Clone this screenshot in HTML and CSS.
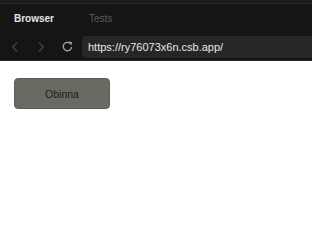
FILE: index.html
```html
<!DOCTYPE html>
<html>
<head>
<meta charset="utf-8">
<link rel="stylesheet" href="styles.css">
</head>
<body>
<div class="chrome">
  <div class="topline"></div>
  <div class="tabs">
    <span class="tab active">Browser</span>
    <span class="tab">Tests</span>
  </div>
  <div class="navbar">
    <span class="nav-btn">
      <svg width="10" height="12" viewBox="0 0 10 12"><path d="M7 1.5 L2.8 6 L7 10.5" fill="none" stroke="#444" stroke-width="1.3"/></svg>
    </span>
    <span class="nav-btn">
      <svg width="10" height="12" viewBox="0 0 10 12"><path d="M3 1.5 L7.2 6 L3 10.5" fill="none" stroke="#444" stroke-width="1.3"/></svg>
    </span>
    <span class="nav-btn">
      <svg width="13" height="13" viewBox="0 0 13 13"><path d="M10.6 7 A4.2 4.2 0 1 1 9.2 3.4" fill="none" stroke="#a0a0a0" stroke-width="1.4"/><path d="M7.4 1.6 L11 2 L10.4 5.4 Z" fill="#a0a0a0"/></svg>
    </span>
    <div class="url">https://ry76073x6n.csb.app/</div>
  </div>
</div>
<div class="page">
  <button class="btn">Obinna</button>
</div>
</body>
</html>
```
FILE: styles.css
```css
html, body { margin: 0; padding: 0; }
body { width: 312px; height: 240px; background: #fff; font-family: "Liberation Sans", Arial, sans-serif; overflow: hidden; }
.chrome { background: #151515; }
.topline { height: 3px; background: #1c1c1c; border-bottom: 1px solid #262626; }
.tabs { height: 29px; display: flex; align-items: center; padding-left: 14px; gap: 35px; font-size: 10px; }
.tab { color: #5c5c5c; }
.tab.active { color: #e6e6e6; font-weight: bold; }
.navbar { height: 27px; display: flex; align-items: center; padding-left: 2px; border-bottom: 1px solid #2a2a2a; }
.nav-btn { width: 26px; display: flex; justify-content: center; align-items: center; }
.url { flex: 1; margin-left: 2px; height: 22px; background: #262626; border-radius: 3px 0 0 3px; color: #e8e8e8; font-size: 11px; display: flex; align-items: center; padding-left: 6px; }
.page { padding: 17px 14px; }
.btn { width: 96px; height: 31px; background: #6b6a62; border: 1px solid #5f5e56; border-radius: 4px; color: #1a1a1a; font-family: "Liberation Sans", Arial, sans-serif; font-size: 10.5px; padding: 0; }
```
